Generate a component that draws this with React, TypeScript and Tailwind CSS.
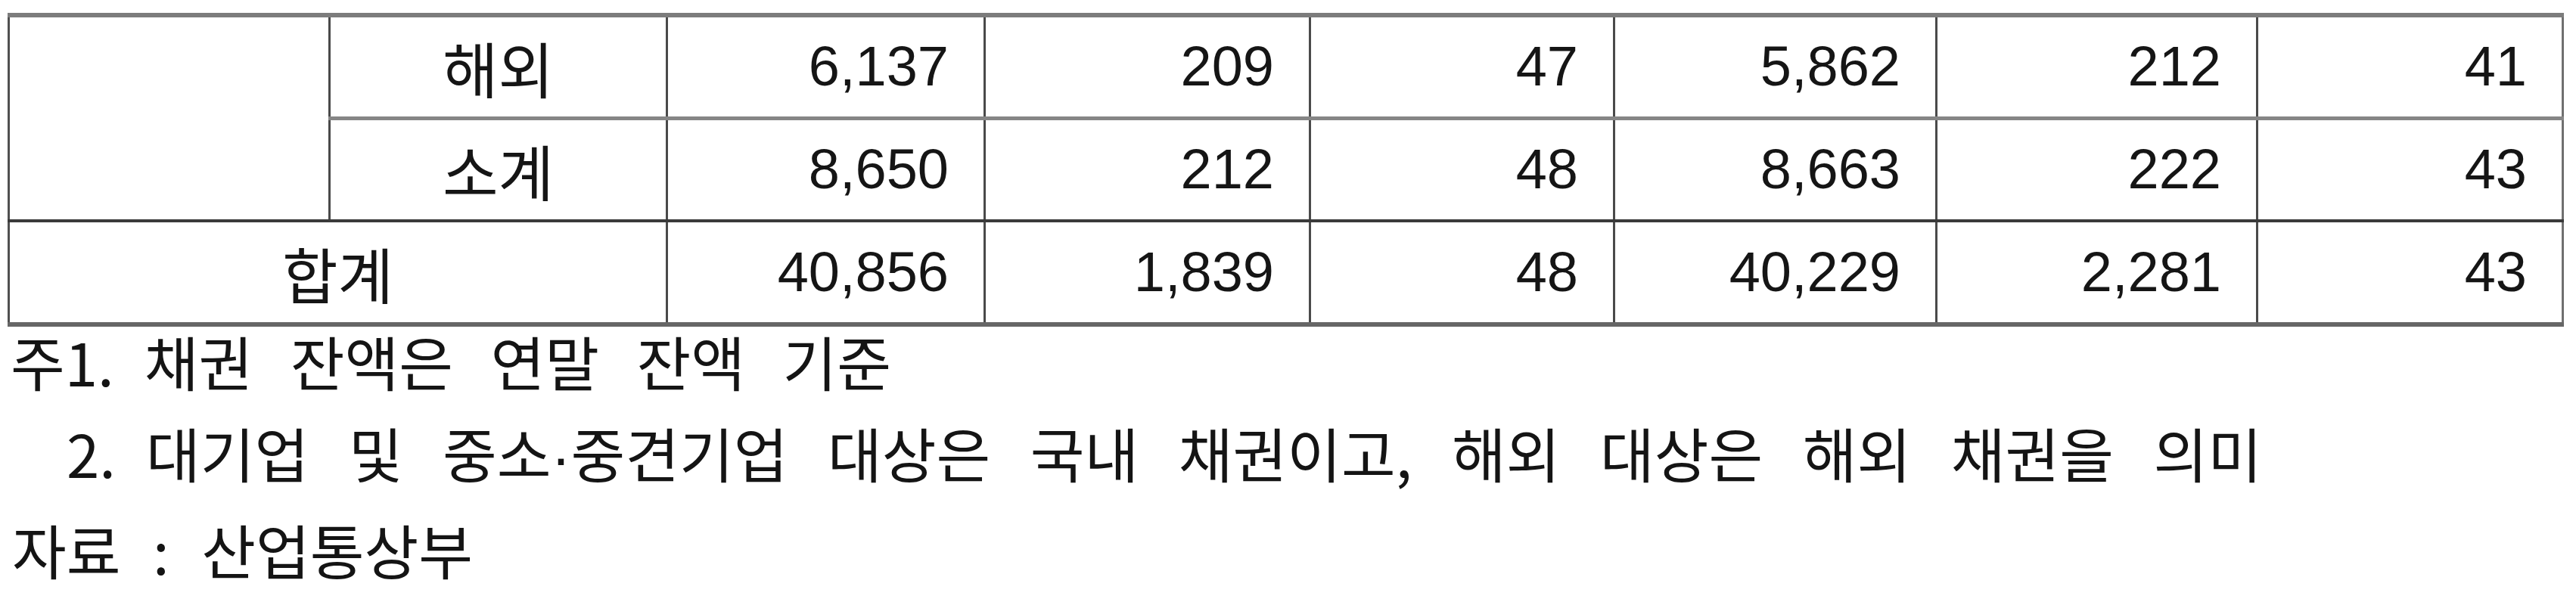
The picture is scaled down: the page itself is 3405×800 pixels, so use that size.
const rows = [
  { label: "해외", values: ["6,137", "209", "47", "5,862", "212", "41"] },
  { label: "소계", values: ["8,650", "212", "48", "8,663", "222", "43"] },
];

const total = ["40,856", "1,839", "48", "40,229", "2,281", "43"];

const widths = ["w-[424px]", "w-[446px]", "w-[420px]", "w-[430px]", "w-[402px]", "w-[426px]", "w-[424px]", "w-[404px]"];

const kr = "font-['Noto_Sans_CJK_KR',sans-serif]";
const num = "font-['Liberation_Sans','Noto_Sans_CJK_KR',sans-serif] text-[74px] leading-none text-right pr-[46px] text-[#151515]";
const vline = "border-r-[3px] border-r-[#4a4a4a]";
const sepTop = "border-b-[5px] border-b-[#868686]";
const sepBottom = "border-b-[4px] border-b-[#3a3a3a]";

export default function App() {
  return (
    <div className="min-h-screen w-[3405px] bg-white pt-[17px] pl-[10px]">
      {/* Table */}
      <table className="table-fixed border-collapse w-[3376px] border-t-[6px] border-t-[#7c7c7c] border-b-[6px] border-b-[#666] border-l-[3px] border-l-[#505050] border-r-[3px] border-r-[#707070]">
        <colgroup>
          {widths.map((w, i) => (
            <col key={i} className={w} />
          ))}
        </colgroup>
        <tbody>
          {rows.map((row, ri) => (
            <tr key={row.label} className="h-[136px]">
              {ri === 0 && <td rowSpan={2} className={`${vline} ${sepBottom}`}></td>}
              <td className={`${vline} ${kr} text-[80px] leading-none text-center text-[#151515] ${ri === 0 ? sepTop : sepBottom}`}>
                {row.label}
              </td>
              {row.values.map((v, i) => (
                <td key={i} className={`${num} ${i < 5 ? vline : ""} ${ri === 0 ? sepTop : sepBottom}`}>
                  {v}
                </td>
              ))}
            </tr>
          ))}
          <tr className="h-[137px]">
            <td colSpan={2} className={`${vline} ${kr} text-[80px] leading-none text-center text-[#151515]`}>
              합계
            </td>
            {total.map((v, i) => (
              <td key={i} className={`${num} ${i < 5 ? vline : ""}`}>
                {v}
              </td>
            ))}
          </tr>
        </tbody>
      </table>

      {/* Notes */}
      <div className={`${kr} text-[78px] leading-none text-[#141414] mt-[6px] flex flex-col gap-[43px]`}>
        <p className="pl-[4px] [word-spacing:32px]">
          <span>주1.</span>
          <span className="ml-[40px]">채권 잔액은 연말 잔액 기준</span>
        </p>
        <p className="pl-[78px] [word-spacing:35px]">
          <span>2.</span>
          <span className="ml-[40px]">
            대기업 및 중소<span className="font-['Liberation_Sans',sans-serif]">·</span>중견기업 대상은 국내 채권이고, 해외 대상은 해외 채권을 의미
          </span>
        </p>
        <p className="pl-[6px] [word-spacing:25px]">자료 : 산업통상부</p>
      </div>
    </div>
  );
}
